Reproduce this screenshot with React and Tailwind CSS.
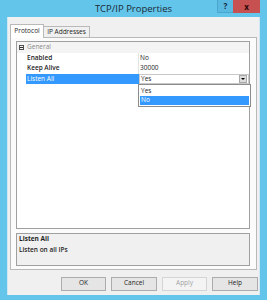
import React from "react";

const font = { fontFamily: '"Open Sans", "Noto Sans", Arial, sans-serif' };

function Row({ name, value, selected, children }) {
  return (
    <div className="flex h-[10.5px] items-center">
      <div className="w-[9px] h-full bg-white" />
      <div
        className={
          "w-[113px] h-full flex items-center pl-[1px] border-r border-[#e3e3e3] " +
          (selected ? "bg-[#3399ff] text-white" : "text-[#1e1e1e] font-semibold")
        }
      >
        {name}
      </div>
      <div className="flex-1 h-full flex items-center pl-[1px] text-[#1e1e1e]">{value}</div>
      {children}
    </div>
  );
}

export default function App() {
  return (
    <div
      className="w-[267px] h-[300px] bg-[#63c5ea] flex flex-col text-[6.5px] leading-none"
      style={font}
    >
      {/* title bar */}
      <div className="h-[17px] flex shrink-0">
        <div className="w-[50px]" />
        <div className="flex-1 flex items-center justify-center text-[9.5px] text-[#1b2a36]">
          TCP/IP Properties
        </div>
        <div className="w-[50px] flex items-start">
          <div className="w-[16px] h-[13px] bg-[#5ab9e0] border-l border-b border-[#4aa6cc] flex items-center justify-center text-[8px] font-bold text-[#13283a]">
            ?
          </div>
          <div className="w-[27px] h-[13px] bg-[#c75050] flex items-center justify-center text-[8px] font-bold text-[#2a0808]">
            x
          </div>
        </div>
      </div>

      {/* dialog body */}
      <div className="mx-[7px] mb-[5px] flex-1 bg-[#f0f0f0] border-l border-r border-[#cfe7f2] flex flex-col">
        {/* tabs */}
        <div className="flex items-end pl-[2px] pt-[6px] h-[20px] shrink-0">
          <div className="relative z-10 h-[14px] w-[34px] bg-white border border-b-0 border-[#b9b9b9] flex items-center justify-center text-[#1e1e1e] mb-[-1px]">
            Protocol
          </div>
          <div className="h-[11px] w-[46px] bg-[#f0f0f0] border border-l-0 border-b-0 border-[#b9b9b9] flex items-center justify-center text-[#1e1e1e]">
            IP Addresses
          </div>
        </div>

        {/* tab panel */}
        <div className="mx-[2px] mr-[2px] h-[233px] bg-[#fbfbfb] border border-[#b9b9b9] pl-[5px] pr-[6px] pt-[3px] pb-[3px] flex flex-col gap-[4px]">
          {/* property grid */}
          <div className="relative h-[188px] bg-white border border-[#a0a0a0] flex flex-col">
            <div className="flex h-[10.5px] items-center bg-[#f4f4f4]">
              <div className="w-[9px] h-full flex items-center justify-center">
                <div className="w-[5px] h-[5px] border border-[#505050] flex items-center justify-center">
                  <div className="w-[3px] h-px bg-[#303030]" />
                </div>
              </div>
              <div className="pl-[1px] text-[#8a8a8a]">General</div>
            </div>
            <Row name="Enabled" value="No" />
            <Row name="Keep Alive" value="30000" />
            <div className="flex h-[10.5px] items-center">
              <div className="w-[9px] h-full bg-white" />
              <div className="w-[113px] h-full flex items-center pl-[1px] bg-[#3399ff] text-white">
                Listen All
              </div>
              <div className="flex-1 h-full flex items-center justify-between pl-[1px] pr-[1px] border border-[#c8c8c8] text-[#1e1e1e]">
                <span>Yes</span>
                <div className="w-[8px] h-[8px] bg-[#dcdcdc] border border-[#a8a8a8] flex flex-col items-center justify-center gap-[1px]">
                  <div className="w-0 h-0 border-l-[2px] border-r-[2px] border-t-[2px] border-l-transparent border-r-transparent border-t-black" />
                </div>
              </div>
            </div>
            {/* dropdown popup */}
            <div className="absolute left-[121px] top-[42px] w-[113px] h-[23px] bg-white border border-[#8c8c8c] p-[1px] flex flex-col z-20">
              <div className="h-[10px] flex items-center pl-[1px] text-[#1e1e1e]">Yes</div>
              <div className="h-[10px] flex items-center pl-[1px] bg-[#3399ff] text-white">No</div>
            </div>
          </div>

          {/* description */}
          <div className="flex-1 bg-[#f0f0f0] border border-[#a0a0a0] px-[2px] pt-[2px] flex flex-col gap-[4px] text-[#1e1e1e]">
            <div className="font-bold">Listen All</div>
            <div className="font-semibold">Listen on all IPs</div>
          </div>
        </div>

        {/* footer buttons */}
        <div className="flex-1 flex items-center justify-end gap-[5px] pr-[1px] pt-[2px]">
          <div className="w-[45px] h-[14px] bg-[#e5e5e5] border border-[#acacac] flex items-center justify-center text-[#1e1e1e]">
            OK
          </div>
          <div className="w-[46px] h-[14px] bg-[#e5e5e5] border border-[#acacac] flex items-center justify-center text-[#1e1e1e]">
            Cancel
          </div>
          <div className="w-[45px] h-[14px] bg-[#f4f4f4] border border-[#d5d5d5] flex items-center justify-center text-[#a3a3a3]">
            Apply
          </div>
          <div className="w-[46px] h-[14px] bg-[#e5e5e5] border border-[#acacac] flex items-center justify-center text-[#1e1e1e]">
            Help
          </div>
        </div>
      </div>
    </div>
  );
}
